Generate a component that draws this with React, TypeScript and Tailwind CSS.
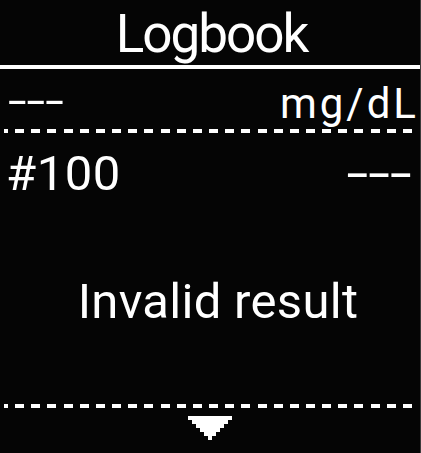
import React from 'react';

// Dotted separator used on the meter screen: a short lead-in pixel, then even dashes
function DashRule() {
  const dashes = Array.from({ length: 25 });
  return (
    <div className="flex h-[4px] justify-between pl-[4px] pr-[8px]">
      <div className="h-[4px] w-[4px] bg-white" />
      {dashes.map((_, i) => (
        <div key={i} className="h-[4px] w-[9px] bg-white" />
      ))}
    </div>
  );
}

// Stepped down-arrow, drawn as stacked pixel rows
function ScrollArrow() {
  const rows = [44, 36, 28, 20, 12, 4];
  return (
    <svg width="44" height="24" viewBox="0 0 44 24" className="block">
      {rows.map((w, i) => (
        <rect key={i} x={(44 - w) / 2} y={i * 4} width={w} height={4} fill="#fff" />
      ))}
    </svg>
  );
}

export default function App() {
  return (
    <div
      className="h-[453px] w-[421px] overflow-hidden border-r border-[#3c3c3c] bg-[#050505] text-white"
      style={{ fontFamily: 'Roboto, "DejaVu Sans", sans-serif' }}
    >
      {/* Title bar */}
      <div className="flex h-[65px] justify-center pt-[8px] pl-[3px]">
        <span className="text-[53px] leading-none font-normal tracking-[-2px]">Logbook</span>
      </div>
      <div className="h-[4px] bg-white" />

      {/* Reading + unit */}
      <div className="flex h-[60px] items-baseline justify-between pt-[14px] pl-[8px] pr-[1px]">
        <span className="inline-block origin-left -translate-y-[3px] scale-x-[1.6] text-[42px] leading-none font-normal">---</span>
        <span className="text-[42px] leading-none font-normal tracking-[3px]">mg/dL</span>
      </div>
      <DashRule />

      {/* Record number */}
      <div className="flex items-baseline justify-between pt-[16px] pl-[6px] pr-[8px]">
        <span className="text-[49px] leading-none font-normal tracking-[0.5px]">#100</span>
        <span className="inline-block origin-right scale-x-[1.6] text-[49px] leading-none font-normal">---</span>
      </div>

      {/* Status */}
      <div className="mt-[79px] flex justify-center pl-[16px]">
        <span className="text-[49px] leading-none font-normal tracking-[0.3px]">Invalid result</span>
      </div>

      <div className="mt-[78px]">
        <DashRule />
      </div>
      <div className="mt-[8px] flex justify-center pr-[1px]">
        <ScrollArrow />
      </div>
    </div>
  );
}
